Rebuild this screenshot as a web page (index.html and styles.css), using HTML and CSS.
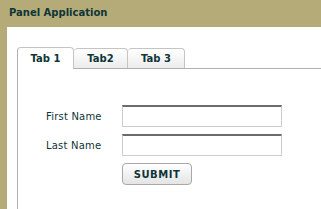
FILE: index.html
```html
<!DOCTYPE html>
<html lang="en">
<head>
  <meta charset="UTF-8">
  <title>Panel Application</title>
  <link rel="stylesheet" href="styles.css">
</head>
<body>
  <div class="header">Panel Application</div>

  <div class="panel">
    <div class="tabs">
      <div class="tab active">Tab 1</div>
      <div class="tab">Tab2</div>
      <div class="tab">Tab 3</div>
    </div>

    <div class="tab-content">
      <form class="form">
        <label for="first_name">First Name</label>
        <input type="text" id="first_name">
        <label for="last_name">Last Name</label>
        <input type="text" id="last_name">
        <span></span>
        <div><button type="submit">SUBMIT</button></div>
      </form>
    </div>
  </div>
</body>
</html>
```

FILE: styles.css
```css
html, body {
  height: 100%;
}

body {
  margin: 0;
  background: #b5ab78;
  font-family: 'DejaVu Sans', Verdana, sans-serif;
  color: #0e3537;
  display: flex;
  flex-direction: column;
  overflow: hidden;
}

.header {
  flex-shrink: 0;
  height: 27px;
  box-sizing: border-box;
  padding: 7px 0 0 9px;
  font-size: 10px;
  font-weight: bold;
}

.panel {
  flex: 1;
  min-height: 0;
  display: flex;
  flex-direction: column;
  margin-left: 7px;
  background: #fff;
  padding: 21px 0 0 10px;
}

.tabs {
  display: flex;
  border-bottom: 1px solid #b0b0b0;
}

.tab {
  height: 20px;
  box-sizing: border-box;
  width: 54px;
  text-align: center;
  font-size: 10px;
  font-weight: bold;
  line-height: 19px;
  border: 1px solid #c4c4c4;
  border-bottom: none;
  border-left: none;
  border-radius: 4px 4px 0 0;
  background: linear-gradient(to bottom, #ffffff 0%, #ececec 100%);
}

.tab.active {
  width: 57px;
  height: 22px;
  margin-top: -1px;
  margin-bottom: -1px;
  line-height: 22px;
  border-left: 1px solid #b0b0b0;
  background: #fff;
}

.tabs .tab:nth-child(3) {
  width: 57px;
}

.tab-content {
  flex: 1;
  border-left: 1px solid #b0b0b0;
  padding: 36px 0 0 28px;
}

.form {
  display: grid;
  grid-template-columns: 76px 160px;
  row-gap: 7px;
  align-items: center;
  font-size: 10px;
}

.form label {
  letter-spacing: 0.2px;
}

.form input {
  height: 22px;
  box-sizing: border-box;
  border: 1px solid #cccccc;
  border-top: 2px solid #6b6b6b;
  margin: 0;
  padding: 2px;
}

button {
  width: 70px;
  height: 22px;
  border: 1px solid #a8a8a8;
  border-radius: 4px;
  background: linear-gradient(to bottom, #ffffff 0%, #e4e4e4 100%);
  font-family: 'DejaVu Sans', Verdana, sans-serif;
  font-size: 10px;
  font-weight: bold;
  color: #0e3537;
  letter-spacing: 0.5px;
}
```
